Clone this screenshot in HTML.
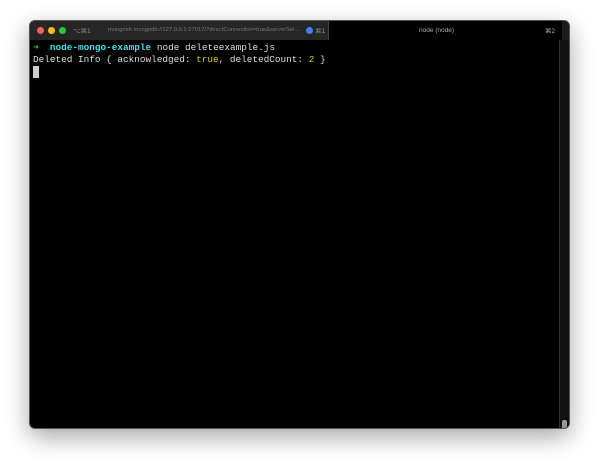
<!DOCTYPE html>
<html><head><style>
body{margin:0;width:600px;height:468px;background:#fff;position:relative;overflow:hidden}
.win{position:absolute;left:29px;top:20px;width:541px;height:409px;background:#000;border-radius:6px;box-shadow:0 8px 24px rgba(0,0,0,.35);overflow:hidden;border:1px solid #555;box-sizing:border-box}
.tb{position:absolute;left:0;top:0;width:100%;height:19px;background:#1c1c1c;font:6.5px "Liberation Sans",sans-serif;color:#888;white-space:nowrap}
.tab1{position:absolute;left:0;top:0;width:298px;height:19px;background:#262626;border-right:1px solid #444}
.tab2{position:absolute;left:299px;top:0;width:233px;height:19px;background:#000}
.dot{position:absolute;top:6px;width:7px;height:7px;border-radius:50%}
.term{position:absolute;left:3px;top:21px;font:9.4px/12px "Liberation Mono",monospace;color:#ddd;white-space:pre}
.sb{position:absolute;right:0;top:19px;width:9px;height:390px;background:#111;border-left:1px solid #333}
</style></head><body>
<div class="win">
<div class="tb">
<div class="tab1">
<div class="dot" style="left:7px;background:#fe5f57"></div>
<div class="dot" style="left:18px;background:#febc2e"></div>
<div class="dot" style="left:29px;background:#28c840"></div>
<span style="position:absolute;left:43px;top:6px">⌥⌘1</span>
<span style="position:absolute;left:78px;top:6px;color:#777;font-size:5.8px">mongosh mongodb://127.0.0.1:27017/?directConnection=true&amp;serverSel...</span>
<div class="dot" style="left:276px;top:6px;background:#3b82f6"></div>
<span style="position:absolute;left:285px;top:6px">⌘1</span>
</div>
<div class="tab2"><span style="position:absolute;left:90px;top:6px;color:#aaa">node (node)</span><span style="position:absolute;left:216px;top:6px;color:#aaa">⌘2</span></div>
</div>
<div class="sb"><div style="position:absolute;left:2px;top:380px;width:5px;height:9px;background:#999;border-radius:2px"></div></div>
<div class="term"><span style="color:#2fd14a">➜</span>  <b style="color:#40e0e8">node-mongo-example</b> node deleteexample.js
Deleted Info { acknowledged: <span style="color:#d9c800">true</span>, deletedCount: <span style="color:#d9c800">2</span> }
<span style="display:inline-block;width:6px;height:12px;background:#ccc;vertical-align:top"></span></div>
</div>
</body></html>
